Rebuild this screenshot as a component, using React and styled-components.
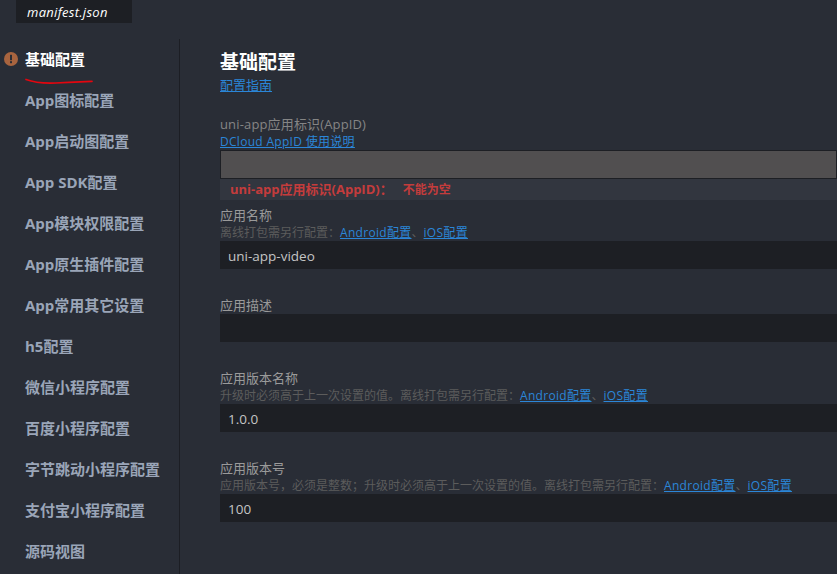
import styled, { createGlobalStyle } from "styled-components";

const GlobalStyle = createGlobalStyle`
    html, body {
        margin: 0;
        padding: 0;
        height: 100%;
        overflow: hidden;
        background: #292d36;
        font-family: "Open Sans", "Noto Sans CJK SC", sans-serif;
    }
`

const Page = styled("div")`
    width: 837px;
    height: 574px;
    overflow: hidden;
    display: flex;
    flex-direction: column;
`

const TabBar = styled("div")`
    height: 23px;
    padding-left: 16px;
    display: flex;
    flex-shrink: 0;
`

const Tab = styled("div")`
    width: 116px;
    box-sizing: border-box;
    padding-left: 11px;
    background: #1d1f24;
    color: #fff;
    font-size: 13px;
    letter-spacing: 0.3px;
    font-style: italic;
    line-height: 25px;
`

const Body = styled("div")`
    display: flex;
    flex: 1;
    min-height: 0;
    padding-top: 16px;
`

const Sidebar = styled("div")`
    width: 180px;
    box-sizing: border-box;
    flex-shrink: 0;
    border-right: 1px solid #1c1e24;
    display: flex;
    flex-direction: column;
`

const MenuItem = styled("div")`
    height: 41px;
    flex-shrink: 0;
    padding-left: 25px;
    display: flex;
    align-items: center;
    font-size: 15px;
    font-weight: 700;
    white-space: nowrap;
    color: ${(props) => (props.$active ? "#ffffff" : "#9aa5b8")};
`

const ActiveWrap = styled("div")`
    position: relative;
    margin-top: -1px;
`

const WarnIcon = styled("svg")`
    position: absolute;
    left: 4px;
    top: 14px;
    width: 14px;
    height: 14px;
`

const Squiggle = styled("svg")`
    position: absolute;
    left: 24px;
    top: 39px;
    width: 72px;
    height: 8px;
`

const Main = styled("div")`
    flex: 1;
    min-width: 0;
    padding: 11px 0 0 40px;
`

const Title = styled("div")`
    font-size: 19px;
    font-weight: 700;
    color: #fff;
    line-height: 24px;
    height: 26px;
`

const GuideLink = styled("a")`
    display: block;
    width: fit-content;
    font-size: ${(props) => (props.$small ? 12 : 13)}px;
    letter-spacing: ${(props) => (props.$small ? 0.3 : 0)}px;
    line-height: ${(props) => (props.$small ? 17 : 18)}px;
    color: #2b86d8;
    text-decoration: underline;
`

const Label = styled("div")`
    font-size: 13px;
    letter-spacing: ${(props) => (props.$dim ? 0.15 : 0)}px;
    line-height: 18px;
    color: ${(props) => (props.$dim ? "#858585" : "#9a9a9a")};
`

const Hint = styled("div")`
    font-size: 12px;
    line-height: 16px;
    margin-top: 1px;
    color: #5c5c5c;
    white-space: nowrap;
`

const InlineLink = styled("a")`
    color: #2b86d8;
    letter-spacing: 0.3px;
    text-decoration: underline;
`

const Section = styled("div")`
    margin-top: ${(props) => props.$top}px;
`

const Input = styled("div")`
    height: 28px;
    box-sizing: border-box;
    padding: 1px 0 0 8px;
    background: #1d1f24;
    color: #c4c4c4;
    font-size: 13.5px;
    line-height: 28px;
`

const DisabledInput = styled("div")`
    height: 29px;
    box-sizing: border-box;
    background: #514f50;
    border: 1px solid #1d1f24;
`

const ErrorRow = styled("div")`
    height: 21px;
    padding-left: 10px;
    background: #32363f;
    color: #c43c3c;
    font-size: 12px;
    font-weight: 700;
    line-height: 21px;
    display: flex;
    gap: 10px;
`

const ErrorField = styled("span")`
    font-size: 13px;
`

const menu = [
    "App图标配置",
    "App启动图配置",
    "App SDK配置",
    "App模块权限配置",
    "App原生插件配置",
    "App常用其它设置",
    "h5配置",
    "微信小程序配置",
    "百度小程序配置",
    "字节跳动小程序配置",
    "支付宝小程序配置",
    "源码视图",
]

const App = () => {
    return (
        <Page>
            <GlobalStyle />
            <TabBar>
                <Tab>manifest.json</Tab>
            </TabBar>
            <Body>
                <Sidebar>
                    <ActiveWrap>
                        <MenuItem $active>基础配置</MenuItem>
                        <WarnIcon viewBox="0 0 14 14">
                            <circle cx="7" cy="7" r="7" fill="#a8643f" />
                            <rect x="6" y="2.8" width="2" height="5.4" fill="#2a2d35" />
                            <rect x="6" y="9.2" width="2" height="2" fill="#2a2d35" />
                        </WarnIcon>
                        <Squiggle viewBox="0 0 72 8">
                            <path d="M2 2.5C10 5.5 20 6.5 32 6C44 5.5 58 4.8 68 4.4" fill="none" stroke="#e3060f" strokeWidth="1.7" strokeLinecap="round" />
                        </Squiggle>
                    </ActiveWrap>
                    {menu.map((item) => (
                        <MenuItem key={item}>{item}</MenuItem>
                    ))}
                </Sidebar>
                <Main>
                    <Title>基础配置</Title>
                    <GuideLink>配置指南</GuideLink>
                    <Section $top={21}>
                        <Label $dim>uni-app应用标识(AppID)</Label>
                        <GuideLink $small>DCloud AppID 使用说明</GuideLink>
                        <DisabledInput />
                        <ErrorRow>
                            <ErrorField>uni-app应用标识(AppID)：</ErrorField>
                            <span>不能为空</span>
                        </ErrorRow>
                    </Section>
                    <Section $top={6}>
                        <Label>应用名称</Label>
                        <Hint>
                            离线打包需另行配置：<InlineLink>Android配置</InlineLink>、<InlineLink>iOS配置</InlineLink>
                        </Hint>
                        <Input>uni-app-video</Input>
                    </Section>
                    <Section $top={27}>
                        <Label>应用描述</Label>
                        <Input />
                    </Section>
                    <Section $top={27}>
                        <Label>应用版本名称</Label>
                        <Hint>
                            升级时必须高于上一次设置的值。离线打包需另行配置：<InlineLink>Android配置</InlineLink>、<InlineLink>iOS配置</InlineLink>
                        </Hint>
                        <Input>1.0.0</Input>
                    </Section>
                    <Section $top={27}>
                        <Label>应用版本号</Label>
                        <Hint>
                            应用版本号，必须是整数；升级时必须高于上一次设置的值。离线打包需另行配置：<InlineLink>Android配置</InlineLink>、<InlineLink>iOS配置</InlineLink>
                        </Hint>
                        <Input>100</Input>
                    </Section>
                </Main>
            </Body>
        </Page>
    );
};

export default App;
